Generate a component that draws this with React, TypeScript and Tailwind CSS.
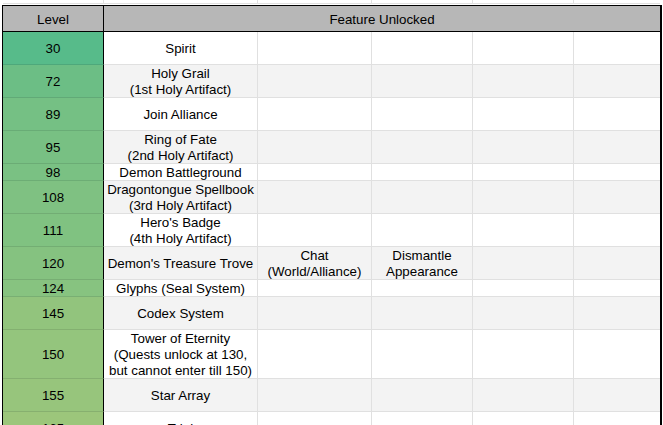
import React from "react";

type Row = {
  level: number;
  tone: string;
  height: string;
  feature: string[];
  extra?: string[][];
};

// heights include the 1px bottom gridline
const rows: Row[] = [
  { level: 30, tone: "bg-[#57bb8a]", height: "h-[33px]", feature: ["Spirit"] },
  { level: 72, tone: "bg-[#6cbe85]", height: "h-[33px]", feature: ["Holy Grail", "(1st Holy Artifact)"] },
  { level: 89, tone: "bg-[#75c084]", height: "h-[33px]", feature: ["Join Alliance"] },
  { level: 95, tone: "bg-[#78c083]", height: "h-[33px]", feature: ["Ring of Fate", "(2nd Holy Artifact)"] },
  { level: 98, tone: "bg-[#7ac183]", height: "h-[17px]", feature: ["Demon Battleground"] },
  { level: 108, tone: "bg-[#7fc182]", height: "h-[33px]", feature: ["Dragontongue Spellbook", "(3rd Holy Artifact)"] },
  { level: 111, tone: "bg-[#80c281]", height: "h-[33px]", feature: ["Hero's Badge", "(4th Holy Artifact)"] },
  {
    level: 120,
    tone: "bg-[#85c280]",
    height: "h-[33px]",
    feature: ["Demon's Treasure Trove"],
    extra: [["Chat", "(World/Alliance)"], ["Dismantle", "Appearance"]],
  },
  { level: 124, tone: "bg-[#87c380]", height: "h-[17px]", feature: ["Glyphs (Seal System)"] },
  { level: 145, tone: "bg-[#92c47d]", height: "h-[33px]", feature: ["Codex System"] },
  {
    level: 150,
    tone: "bg-[#94c57d]",
    height: "h-[49px]",
    feature: ["Tower of Eternity", "(Quests unlock at 130,", "but cannot enter till 150)"],
  },
  { level: 155, tone: "bg-[#97c57c]", height: "h-[33px]", feature: ["Star Array"] },
  { level: 165, tone: "bg-[#9cc67b]", height: "h-[33px]", feature: ["Trial"] },
];

const Lines: React.FC<{ lines?: string[] }> = ({ lines }) => (
  <div className="mt-[2px] flex flex-col items-center">
    {(lines ?? []).map((l) => (
      <span key={l} className="whitespace-nowrap">
        {l}
      </span>
    ))}
  </div>
);

export default function App() {
  return (
    <div className="w-[663px] h-[425px] overflow-hidden bg-white font-['Liberation_Sans',Arial,sans-serif] text-[13.33px] leading-4 text-black">
      {/* sliver of the row above */}
      <div className="flex h-[5px] pl-[3px]">
        <div className="flex h-[4px] w-[657px] border-b border-[#e0e0e0]">
          <div className="w-[101px] border-r border-[#e0e0e0]" />
          <div className="w-[154px] border-r border-[#e0e0e0]" />
          <div className="w-[114px] border-r border-[#e0e0e0]" />
          <div className="w-[101px] border-r border-[#e0e0e0]" />
          <div className="w-[101px] border-r border-[#e0e0e0]" />
          <div className="flex-1" />
        </div>
      </div>

      <div className="ml-[2px] w-[660px] border-l border-t border-r-2 border-black">
        <header className="flex h-[26px] border-b border-black bg-[#b7b7b7]">
          <div className="flex w-[101px] items-center justify-center border-r border-black">
            <Lines lines={["Level"]} />
          </div>
          <div className="flex flex-1 items-center justify-center">
            <Lines lines={["Feature Unlocked"]} />
          </div>
        </header>

        {rows.map((r, i) => (
          <div key={r.level} className={`flex ${r.height}`}>
            <div
              className={`flex w-[101px] items-center justify-center border-r border-b border-r-black border-b-black/10 ${r.tone}`}
            >
              <Lines lines={[String(r.level)]} />
            </div>
            <div className={`flex flex-1 ${i % 2 ? "bg-[#f3f3f3]" : "bg-white"}`}>
              <div className="flex w-[154px] items-center justify-center border-r border-b border-[#e0e0e0]">
                <Lines lines={r.feature} />
              </div>
              <div className="flex w-[114px] items-center justify-center border-r border-b border-[#e0e0e0]">
                <Lines lines={r.extra?.[0]} />
              </div>
              <div className="flex w-[101px] items-center justify-center border-r border-b border-[#e0e0e0]">
                <Lines lines={r.extra?.[1]} />
              </div>
              <div className="w-[101px] border-r border-b border-[#e0e0e0]" />
              <div className="flex-1 border-b border-[#e0e0e0]" />
            </div>
          </div>
        ))}
      </div>
    </div>
  );
}
